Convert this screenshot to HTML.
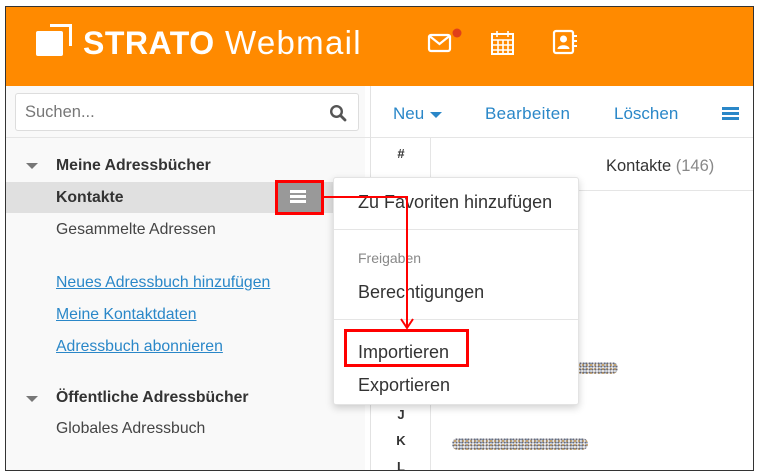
<!DOCTYPE html>
<html><head><meta charset="utf-8"><style>
*{margin:0;padding:0;box-sizing:border-box}
body{width:759px;height:475px;background:#fff;position:relative;overflow:hidden;font-family:"Liberation Sans",sans-serif;color:#333}
.a{position:absolute;white-space:nowrap}
.frame{position:absolute;left:5px;top:6px;width:749px;height:465px;border:1.5px solid #333;overflow:hidden;background:#fff}
.lnk{color:#2a87c8;text-decoration:underline;font-size:15.8px}
.tb{color:#2a87c8;font-size:17px}
.mi{font-size:18px;color:#333}
.sb{font-size:15.8px}
.let{font-size:13px;font-weight:bold;color:#333;width:60px;text-align:center}
.scr{background:radial-gradient(circle,#445 0 1px,transparent 1.2px) 0 0/3px 3px,radial-gradient(circle,#c94 0 1px,transparent 1.2px) 1px 1px/4px 4px,radial-gradient(circle,#8ac 0 1px,transparent 1.2px) 2px 0/5px 3px;opacity:.8}
</style></head><body>
<div class="frame">
 <div class="a" style="left:0;top:0;width:749px;height:79px;background:#ff8a00"></div>
 <div class="a" style="left:30px;top:24px;width:27px;height:25px;background:#fff;border-radius:2px"></div>
 <div class="a" style="left:44px;top:17px;width:22px;height:22px;border-top:3px solid #fff;border-right:3px solid #fff"></div>
 <div class="a" style="left:77px;top:18px;font-size:32px;font-weight:bold;color:#fff;letter-spacing:0.5px">STRATO</div>
 <div class="a" style="left:219px;top:17px;font-size:33px;color:#fff;letter-spacing:1.3px">Webmail</div>
 <svg class="a" style="left:420px;top:20px" width="40" height="30" viewBox="0 0 40 30"><rect x="3" y="8" width="21" height="16" rx="2" fill="none" stroke="#fff" stroke-width="2.2"/><path d="M3.5 9 L13.5 17 L23.5 9" fill="none" stroke="#fff" stroke-width="2.2"/><circle cx="31" cy="6" r="4.5" fill="#e0401a"/></svg>
 <svg class="a" style="left:484px;top:22px" width="26" height="28" viewBox="0 0 26 28"><rect x="2" y="5" width="21" height="20" fill="none" stroke="#fff" stroke-width="2"/><path d="M7 2v6M18 2v6M2 11h21M2 16h21M2 21h21M8 11v14M13 11v14M18 11v14" stroke="#fff" stroke-width="1.6"/></svg>
 <svg class="a" style="left:546px;top:21px" width="26" height="28" viewBox="0 0 26 28"><rect x="2" y="3" width="19" height="22" rx="2" fill="none" stroke="#fff" stroke-width="2.2"/><circle cx="11.5" cy="11" r="3.5" fill="#fff"/><path d="M5.5 21c0-5 12-5 12 0z" fill="#fff"/><path d="M22 8h3M22 13h3M22 18h3" stroke="#fff" stroke-width="2"/></svg>

 <div class="a" style="left:0;top:79px;width:359px;height:386px;background:#f9f9f9"></div>
 <div class="a" style="left:364px;top:79px;width:1px;height:386px;background:#e2e2e2"></div>
 <div class="a" style="left:9px;top:86px;width:344px;height:38px;background:#fff;border:1px solid #ddd;border-radius:3px"></div>
 <div class="a" style="left:19px;top:96px;font-size:16.5px;color:#777">Suchen...</div>
 <svg class="a" style="left:323px;top:97px" width="18" height="18" viewBox="0 0 18 18"><circle cx="7.5" cy="7.5" r="5.3" fill="none" stroke="#555" stroke-width="2.4"/><path d="M11.5 11.5L16 16" stroke="#555" stroke-width="2.8" stroke-linecap="round"/></svg>
 <div class="a" style="left:0;top:130px;width:364px;height:1px;background:#e5e5e5"></div>
 <div class="a" style="left:20px;top:156px;width:0;height:0;border-left:6px solid transparent;border-right:6px solid transparent;border-top:6px solid #777"></div>
 <div class="a sb" style="left:50px;top:150px;font-weight:bold">Meine Adressbücher</div>
 <div class="a" style="left:0;top:175px;width:359px;height:31px;background:#e0e0e0"></div>
 <div class="a sb" style="left:50px;top:182px;font-weight:bold">Kontakte</div>
 <div class="a sb" style="left:50px;top:214px;color:#444">Gesammelte Adressen</div>
 <div class="a lnk" style="left:50px;top:267px">Neues Adressbuch hinzufügen</div>
 <div class="a lnk" style="left:50px;top:299px">Meine Kontaktdaten</div>
 <div class="a lnk" style="left:50px;top:331px">Adressbuch abonnieren</div>
 <div class="a" style="left:20px;top:389px;width:0;height:0;border-left:6px solid transparent;border-right:6px solid transparent;border-top:6px solid #777"></div>
 <div class="a sb" style="left:50px;top:382px;font-weight:bold">Öffentliche Adressbücher</div>
 <div class="a sb" style="left:50px;top:413px;color:#444">Globales Adressbuch</div>

 <div class="a" style="left:269px;top:173px;width:49px;height:35px;background:#999;border:3px solid #f00"></div>
 <div class="a" style="left:284px;top:183px;width:16px;height:3px;background:#fff;box-shadow:0 5px 0 #fff,0 10px 0 #fff"></div>

 <div class="a tb" style="left:387px;top:97px">Neu</div>
 <div class="a" style="left:424px;top:105px;width:0;height:0;border-left:6px solid transparent;border-right:6px solid transparent;border-top:6px solid #2a87c8"></div>
 <div class="a tb" style="left:479px;top:97px;letter-spacing:0.3px">Bearbeiten</div>
 <div class="a tb" style="left:608px;top:97px">Löschen</div>
 <div class="a" style="left:716px;top:100px;width:17px;height:3px;background:#2a87c8;box-shadow:0 5px 0 #2a87c8,0 10px 0 #2a87c8"></div>
 <div class="a" style="left:365px;top:130px;width:384px;height:1px;background:#e5e5e5"></div>
 <div class="a" style="left:424px;top:131px;width:1px;height:334px;background:#e5e5e5"></div>
 <div class="a" style="left:425px;top:183px;width:324px;height:1px;background:#e5e5e5"></div>
 <div class="a" style="left:600px;top:150px;font-size:16.5px;color:#333">Kontakte <span style="color:#888">(146)</span></div>
 <div class="a let" style="left:365px;top:139px">#</div>
 <div class="a let" style="left:365px;top:400px">J</div>
 <div class="a let" style="left:365px;top:426px">K</div>
 <div class="a let" style="left:365px;top:452px">L</div>

 <div class="a scr" style="left:570px;top:355px;width:42px;height:12px;border-radius:6px"></div>
 <div class="a scr" style="left:446px;top:431px;width:136px;height:12px;border-radius:6px"></div>

 <div class="a" style="left:327px;top:170px;width:246px;height:228px;background:#fff;border:1px solid #e3e3e3;border-radius:3px;box-shadow:0 3px 8px rgba(0,0,0,.18)"></div>
 <div class="a mi" style="left:352px;top:185px">Zu Favoriten hinzufügen</div>
 <div class="a" style="left:328px;top:222px;width:244px;height:1px;background:#e5e5e5"></div>
 <div class="a" style="left:352px;top:243px;font-size:14px;color:#888">Freigaben</div>
 <div class="a mi" style="left:352px;top:275px">Berechtigungen</div>
 <div class="a" style="left:328px;top:312px;width:244px;height:1px;background:#e5e5e5"></div>
 <div class="a mi" style="left:352px;top:335px">Importieren</div>
 <div class="a mi" style="left:352px;top:368px">Exportieren</div>
 <div class="a" style="left:338px;top:322px;width:125px;height:38px;border:3px solid #f00"></div>

 <svg class="a" style="left:0;top:0" width="749" height="465"><path d="M318 190H401V321" fill="none" stroke="#f00" stroke-width="2"/><path d="M395 312L401 321L407 312" fill="none" stroke="#f00" stroke-width="2"/></svg>
</div>
</body></html>
